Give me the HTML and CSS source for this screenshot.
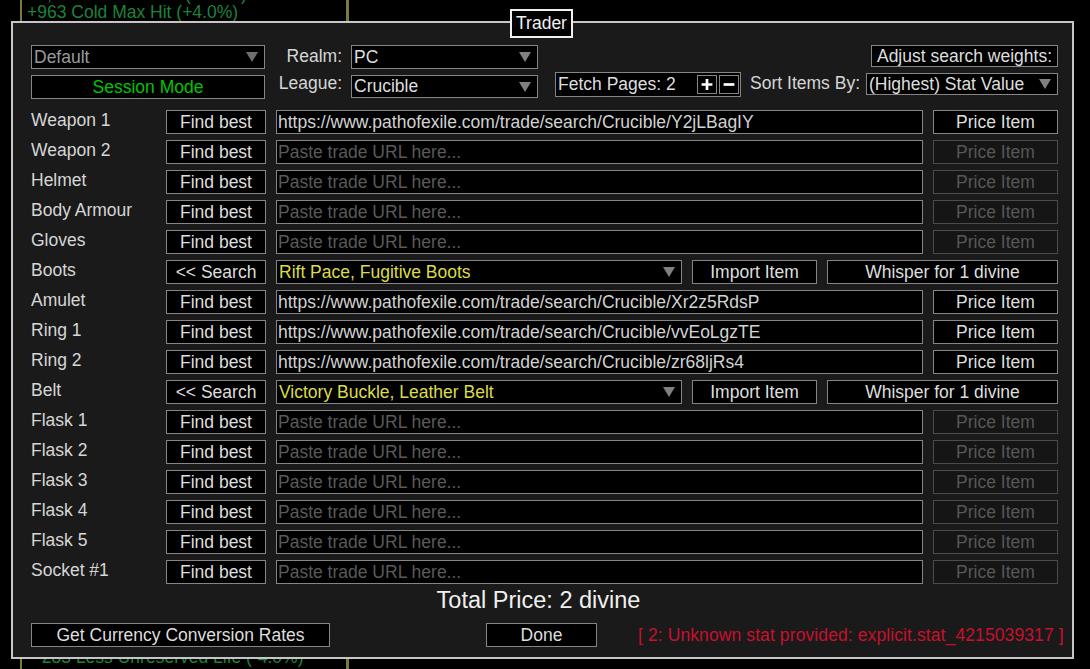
FILE: index.html
```html
<!DOCTYPE html>
<html lang="en">
<head>
    <meta charset="UTF-8">
    <title>Trader</title>
    <link rel="stylesheet" href="styles.css">
</head>
<body>
    <!-- panel behind the popup -->
    <div class="stat-panel">
        <div>
            <p class="stat first">+1,032 Fire Max Hit (+4.0%)</p>
            <p class="stat">+963 Cold Max Hit (+4.0%)</p>
        </div>
        <p class="stat last">-283 Less Unreserved Life (-4.0%)</p>
    </div>

    <div class="dialog">
        <div class="dialog-title">Trader</div>

        <div class="header-row">
            <div class="select default w234"><span>Default</span><svg class="arrow" viewBox="0 0 12 10"><polygon points="0,0 12,0 6,10"/></svg></div>
            <div class="field-label w78">Realm:</div>
            <div class="select w187 ml8"><span>PC</span><svg class="arrow" viewBox="0 0 12 10"><polygon points="0,0 12,0 6,10"/></svg></div>
            <button class="btn adjust">Adjust search weights:</button>
        </div>

        <div class="header-row second">
            <button class="btn session w234">Session Mode</button>
            <div class="field-label w78">League:</div>
            <div class="select w187 ml8 league"><span>Crucible</span><svg class="arrow" viewBox="0 0 12 10"><polygon points="0,0 12,0 6,10"/></svg></div>
            <div class="fetch">
                <span>Fetch Pages: 2</span>
                <span class="step-btns">
                    <span class="step"><svg viewBox="0 0 20 18"><path d="M10 3v12M4 9h12"/></svg></span>
                    <span class="step"><svg viewBox="0 0 20 18"><path d="M4 9h12"/></svg></span>
                </span>
            </div>
            <div class="field-label w119">Sort Items By:</div>
            <div class="select sort"><span>(Highest) Stat Value</span><svg class="arrow" viewBox="0 0 12 10"><polygon points="0,0 12,0 6,10"/></svg></div>
        </div>

        <div class="slots">
            <div class="slot">
                <div class="slot-name">Weapon 1</div>
                <button class="btn find">Find best</button>
                <div class="url">https://www.pathofexile.com/trade/search/Crucible/Y2jLBagIY</div>
                <button class="btn price">Price Item</button>
            </div>
            <div class="slot">
                <div class="slot-name">Weapon 2</div>
                <button class="btn find">Find best</button>
                <div class="url empty">Paste trade URL here...</div>
                <button class="btn price off">Price Item</button>
            </div>
            <div class="slot">
                <div class="slot-name">Helmet</div>
                <button class="btn find">Find best</button>
                <div class="url empty">Paste trade URL here...</div>
                <button class="btn price off">Price Item</button>
            </div>
            <div class="slot">
                <div class="slot-name">Body Armour</div>
                <button class="btn find">Find best</button>
                <div class="url empty">Paste trade URL here...</div>
                <button class="btn price off">Price Item</button>
            </div>
            <div class="slot">
                <div class="slot-name">Gloves</div>
                <button class="btn find">Find best</button>
                <div class="url empty">Paste trade URL here...</div>
                <button class="btn price off">Price Item</button>
            </div>
            <div class="slot">
                <div class="slot-name">Boots</div>
                <button class="btn find">&lt;&lt; Search</button>
                <div class="select result"><span>Rift Pace, Fugitive Boots</span><svg class="arrow" viewBox="0 0 12 10"><polygon points="0,0 12,0 6,10"/></svg></div>
                <button class="btn import">Import Item</button>
                <button class="btn whisper">Whisper for 1 divine</button>
            </div>
            <div class="slot">
                <div class="slot-name">Amulet</div>
                <button class="btn find">Find best</button>
                <div class="url">https://www.pathofexile.com/trade/search/Crucible/Xr2z5RdsP</div>
                <button class="btn price">Price Item</button>
            </div>
            <div class="slot">
                <div class="slot-name">Ring 1</div>
                <button class="btn find">Find best</button>
                <div class="url">https://www.pathofexile.com/trade/search/Crucible/vvEoLgzTE</div>
                <button class="btn price">Price Item</button>
            </div>
            <div class="slot">
                <div class="slot-name">Ring 2</div>
                <button class="btn find">Find best</button>
                <div class="url">https://www.pathofexile.com/trade/search/Crucible/zr68ljRs4</div>
                <button class="btn price">Price Item</button>
            </div>
            <div class="slot">
                <div class="slot-name">Belt</div>
                <button class="btn find">&lt;&lt; Search</button>
                <div class="select result"><span>Victory Buckle, Leather Belt</span><svg class="arrow" viewBox="0 0 12 10"><polygon points="0,0 12,0 6,10"/></svg></div>
                <button class="btn import">Import Item</button>
                <button class="btn whisper">Whisper for 1 divine</button>
            </div>
            <div class="slot">
                <div class="slot-name">Flask 1</div>
                <button class="btn find">Find best</button>
                <div class="url empty">Paste trade URL here...</div>
                <button class="btn price off">Price Item</button>
            </div>
            <div class="slot">
                <div class="slot-name">Flask 2</div>
                <button class="btn find">Find best</button>
                <div class="url empty">Paste trade URL here...</div>
                <button class="btn price off">Price Item</button>
            </div>
            <div class="slot">
                <div class="slot-name">Flask 3</div>
                <button class="btn find">Find best</button>
                <div class="url empty">Paste trade URL here...</div>
                <button class="btn price off">Price Item</button>
            </div>
            <div class="slot">
                <div class="slot-name">Flask 4</div>
                <button class="btn find">Find best</button>
                <div class="url empty">Paste trade URL here...</div>
                <button class="btn price off">Price Item</button>
            </div>
            <div class="slot">
                <div class="slot-name">Flask 5</div>
                <button class="btn find">Find best</button>
                <div class="url empty">Paste trade URL here...</div>
                <button class="btn price off">Price Item</button>
            </div>
            <div class="slot">
                <div class="slot-name">Socket #1</div>
                <button class="btn find">Find best</button>
                <div class="url empty">Paste trade URL here...</div>
                <button class="btn price off">Price Item</button>
            </div>
        </div>

        <div class="total">Total Price: 2 divine</div>

        <div class="footer-row">
            <button class="btn currency">Get Currency Conversion Rates</button>
            <button class="btn done">Done</button>
            <div class="error">[ 2: Unknown stat provided: explicit.stat_4215039317 ]</div>
        </div>
    </div>
</body>
</html>
```

FILE: styles.css
```css
body {
    margin: 0;
    height: 669px;
    overflow: hidden;
    background-color: #000;
    font-family: "Liberation Sans", Arial, sans-serif;
    font-size: 17.5px;
    color: #dedede;
}

p {
    margin: 0;
}

/* panel that sits behind the popup */
.stat-panel {
    margin-left: 20px;
    width: 329px;
    height: 669px;
    box-sizing: border-box;
    border-left: 2px solid #7c7a3a;
    border-right: 3px solid #7c7a3a;
    padding-left: 5px;
    display: flex;
    flex-direction: column;
    justify-content: space-between;
}

.stat {
    color: #1b833b;
    line-height: 18px;
    white-space: nowrap;
}

.stat.first {
    margin-top: -15px;
}

.stat.last {
    margin-left: 9px;
    margin-bottom: 3px;
}

/* popup */
.dialog {
    position: absolute;
    left: 11px;
    top: 21px;
    width: 1063px;
    height: 638px;
    box-sizing: border-box;
    border: 2px solid #c6c6c6;
    background-color: #1a1a1a;
    padding: 22px 14px 0 18px;
}

.dialog-title {
    position: absolute;
    left: 497px;
    top: -14px;
    width: 59px;
    height: 25px;
    border: 2px solid #f0f0f0;
    background-color: #000;
    color: #f0f0f0;
    text-align: center;
    line-height: 25px;
}

.header-row {
    display: flex;
    align-items: flex-start;
    height: 24px;
}

.header-row.second {
    margin-top: 3px;
    height: 27px;
}

.field-label {
    text-align: right;
    line-height: 22px;
    color: #d6d6d6;
    white-space: nowrap;
}

.w234 { width: 234px; }
.w187 { width: 187px; }
.w78 { width: 77px; }
.w119 { width: 119px; }
.ml8 { margin-left: 9px; }

.btn, .select, .url, .fetch {
    box-sizing: border-box;
    flex-shrink: 0;
    height: 24px;
    border: 1px solid #858585;
    background-color: #000;
    font-family: inherit;
    font-size: inherit;
    color: #dedede;
    padding: 0;
    white-space: nowrap;
    overflow: hidden;
}

.btn {
    text-align: center;
    line-height: 23px;
}

.select {
    display: flex;
    align-items: center;
    justify-content: space-between;
    padding: 0 6px 0 2px;
}

.select .arrow {
    width: 12px;
    height: 10px;
    fill: #808080;
    flex-shrink: 0;
}

.select.default span {
    color: #9a9a9a;
}

.select.default .arrow {
    fill: #6e6e6e;
}

.select.league {
    margin-top: 3px;
    height: 23px;
}

.adjust {
    margin-left: auto;
    width: 187px;
    height: 22px;
    line-height: 20px;
}

.session {
    margin-top: 3px;
    color: #00c400;
}

.fetch {
    margin-left: 17px;
    width: 186px;
    height: 25px;
    display: flex;
    align-items: center;
    justify-content: space-between;
    padding: 0 1px 0 2px;
}

.step-btns {
    display: flex;
    gap: 2px;
}

.step {
    box-sizing: border-box;
    width: 20px;
    height: 19px;
    border: 1px solid #858585;
    display: flex;
}

.step svg {
    width: 18px;
    height: 17px;
    stroke: #fff;
    stroke-width: 3;
}

.select.sort {
    margin-left: 6px;
    margin-top: 1px;
    width: 192px;
    height: 22px;
}

/* item slots */
.slots {
    margin-top: 11px;
}

.slot {
    display: flex;
    height: 24px;
    margin-bottom: 6px;
}

.slot-name {
    width: 135px;
    flex-shrink: 0;
    line-height: 21px;
    color: #d6d6d6;
}

.find {
    width: 100px;
}

.url {
    margin-left: 10px;
    width: 647px;
    line-height: 23px;
    padding-left: 1px;
    color: #d2d2d2;
}

.url.empty {
    color: #5a5a5a;
}

.price {
    margin-left: 10px;
    width: 125px;
}

.price.off {
    background-color: #151515;
    border-color: #4c4c4c;
    color: #575757;
}

.select.result {
    margin-left: 10px;
    width: 406px;
}

.select.result span {
    color: #dcdc48;
}

.import {
    margin-left: 10px;
    width: 125px;
}

.whisper {
    margin-left: 10px;
    width: 231px;
}

.total {
    padding-right: 12px;
    text-align: center;
    font-size: 23.5px;
    line-height: 21px;
    color: #f0f0f0;
}

.footer-row {
    display: flex;
    align-items: center;
    margin-top: 12px;
}

.currency {
    width: 299px;
}

.done {
    margin-left: 156px;
    width: 111px;
}

.error {
    margin-left: 41px;
    letter-spacing: 0.1px;
    color: #c8102e;
    white-space: nowrap;
}
```
